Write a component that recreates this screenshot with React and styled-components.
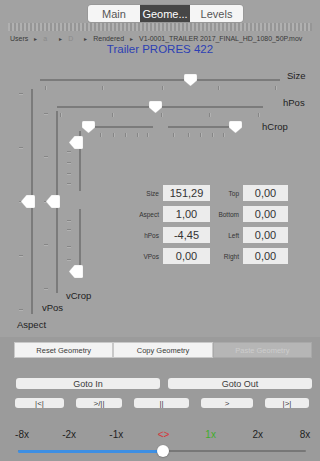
import React from "react";
import styled, { createGlobalStyle } from "styled-components";

const GlobalStyle = createGlobalStyle`
  html, body { margin: 0; padding: 0; background: #a2a2a2; }
  body { font-family: "Liberation Sans", Arial, sans-serif; }
`;

const hSliders = [
  { x: 40, y: 23, len: 240, thumbs: [150], ticks: [5, 62, 122, 178, 235] },
  { x: 57, y: 50, len: 206, thumbs: [98], ticks: [3, 55, 104, 152, 201] },
  { x: 88, y: 70, len: 65, thumbs: [0], ticks: [12, 25, 37, 49, 59] },
  { x: 168, y: 70, len: 68, thumbs: [67], ticks: [5, 20, 32, 44, 55] },
];

const vSliders = [
  { x: 31, y: 33, len: 225, thumbs: [112], ticks: [4, 58, 112, 166, 220] },
  { x: 56, y: 55, len: 182, thumbs: [90], ticks: [2, 45, 90, 133, 177] },
  { x: 79, y: 75, len: 60, thumbs: [11], ticks: [20, 31, 42, 52] },
  { x: 79, y: 153, len: 64, thumbs: [62], ticks: [11, 20, 37, 50] },
];

const sliderLabels = [
  { text: "Size", x: 287, y: 14 },
  { text: "hPos", x: 283, y: 41 },
  { text: "hCrop", x: 262, y: 65 },
  { text: "Aspect", x: 17, y: 263 },
  { text: "vPos", x: 42, y: 246 },
  { text: "vCrop", x: 66, y: 234 },
];

const fields = [
  ["Size", "151,29", "Top", "0,00"],
  ["Aspect", "1,00", "Bottom", "0,00"],
  ["hPos", "-4,45", "Left", "0,00"],
  ["VPos", "0,00", "Right", "0,00"],
];

const transport = [
  { label: "|<|", w: 49 },
  { label: ">/||", w: 46 },
  { label: "||", w: 55 },
  { label: ">", w: 52 },
  { label: "|>|", w: 44 },
];

const speeds = [
  { label: "-8x" },
  { label: "-2x" },
  { label: "-1x" },
  { label: "<>", color: "#d8343a" },
  { label: "1x", color: "#3fae2a" },
  { label: "2x" },
  { label: "8x" },
];

function DownThumb() {
  return (
    <svg width="13" height="12" viewBox="0 0 13 12">
      <path
        d="M1.5 0 H11.5 Q13 0 13 1.5 V6.5 L6.5 12 L0 6.5 V1.5 Q0 0 1.5 0Z"
        fill="#ffffff"
        stroke="#d6d6d6"
        strokeWidth="0.5"
      />
    </svg>
  );
}

function LeftThumb() {
  return (
    <svg width="14" height="13" viewBox="0 0 14 13">
      <path
        d="M14 1.5 V11.5 Q14 13 12.5 13 H5.5 L0 6.5 L5.5 0 H12.5 Q14 0 14 1.5Z"
        fill="#ffffff"
        stroke="#d6d6d6"
        strokeWidth="0.5"
      />
    </svg>
  );
}

function Slider({ x, y, len, thumbs, ticks, vertical }) {
  return (
    <Track $x={x} $y={y} $len={len} $v={vertical}>
      {ticks.map((t, i) => (
        <Tick key={i} $pos={t} $v={vertical} />
      ))}
      {thumbs.map((t, i) => (
        <Thumb key={i} $pos={t} $v={vertical}>
          {vertical ? <LeftThumb /> : <DownThumb />}
        </Thumb>
      ))}
    </Track>
  );
}

export default function App() {
  return (
    <Page>
      <GlobalStyle />
      <Tabs>
        <Tab $w={52}>Main</Tab>
        <Tab $w={50} $active>
          Geome...
        </Tab>
        <Tab $w={53}>Levels</Tab>
      </Tabs>
      <Stripe />
      <PathBar>
        <span>Users</span>
        <Chevron>▸</Chevron>
        <Faded>a</Faded>
        <Chevron>▸</Chevron>
        <Faded>D</Faded>
        <Chevron>▸</Chevron>
        <span>Rendered</span>
        <Chevron>▸</Chevron>
        <FileName>V1-0001_TRAILER 2017_FINAL_HD_1080_50P.mov</FileName>
      </PathBar>
      <Title>Trailer PRORES 422</Title>

      <GeometryCanvas>
        {hSliders.map((s, i) => (
          <Slider key={"h" + i} {...s} />
        ))}
        {vSliders.map((s, i) => (
          <Slider key={"v" + i} {...s} vertical />
        ))}
        {sliderLabels.map((l) => (
          <SliderLabel key={l.text} $x={l.x} $y={l.y}>
            {l.text}
          </SliderLabel>
        ))}
        <FieldGrid>
          {fields.map((row) => (
            <React.Fragment key={row[0]}>
              <FieldLabel>{row[0]}</FieldLabel>
              <FieldValue>{row[1]}</FieldValue>
              <FieldLabel>{row[2]}</FieldLabel>
              <FieldValue>{row[3]}</FieldValue>
            </React.Fragment>
          ))}
        </FieldGrid>
      </GeometryCanvas>

      <BottomPanel>
        <GeometryButtons>
          <GeoButton>Reset Geometry</GeoButton>
          <GeoButton>Copy Geometry</GeoButton>
          <GeoButton $disabled>Paste Geometry</GeoButton>
        </GeometryButtons>
        <GotoRow>
          <RoundButton>Goto In</RoundButton>
          <RoundButton>Goto Out</RoundButton>
        </GotoRow>
        <TransportRow>
          {transport.map((b) => (
            <TransportButton key={b.label} $w={b.w}>
              {b.label}
            </TransportButton>
          ))}
        </TransportRow>
        <SpeedLabels>
          {speeds.map((s) => (
            <SpeedLabel key={s.label} $color={s.color}>
              {s.label}
            </SpeedLabel>
          ))}
        </SpeedLabels>
        <SpeedSlider>
          <SpeedTrack>
            <SpeedFill style={{ width: "50.3%" }} />
            <SpeedKnob style={{ left: "50.3%" }} />
          </SpeedTrack>
        </SpeedSlider>
      </BottomPanel>
    </Page>
  );
}

const Page = styled.div`
  width: 320px;
  height: 461px;
  display: flex;
  flex-direction: column;
  background: #a2a2a2;
  overflow: hidden;
`;

const Tabs = styled.div`
  align-self: flex-start;
  margin: 5px 0 0 88px;
  height: 17px;
  display: flex;
  background: #f5f5f5;
  border-radius: 3px;
  overflow: hidden;
  box-shadow: 0 0 0 0.5px #8d8d8d;
`;

const Tab = styled.div`
  width: ${(p) => p.$w}px;
  display: flex;
  align-items: center;
  justify-content: center;
  font-size: 11px;
  color: ${(p) => (p.$active ? "#ffffff" : "#555555")};
  background: ${(p) => (p.$active ? "#464646" : "transparent")};
`;

const Stripe = styled.div`
  margin: 1px 8px 0;
  height: 8px;
  background: repeating-linear-gradient(
    90deg,
    #b4b4b4 0,
    #b4b4b4 2px,
    #939393 2px,
    #939393 4px
  );
  opacity: 0.8;
`;

const PathBar = styled.div`
  margin-top: 3px;
  padding-left: 10px;
  height: 9px;
  display: flex;
  align-items: center;
  gap: 6px;
  font-size: 7px;
  color: #3a3a3a;
  white-space: nowrap;
`;

const Chevron = styled.span`
  font-size: 6px;
  color: #444;
`;

const Faded = styled.span`
  color: #8a8a8a;
  width: 10px;
`;

const FileName = styled.span`
  letter-spacing: -0.05px;
`;

const Title = styled.div`
  height: 13px;
  line-height: 13px;
  text-align: center;
  font-size: 11.5px;
  color: #2c3fb4;
`;

const GeometryCanvas = styled.div`
  position: relative;
  height: 281px;
  padding: 129px 0 0 130px;
  box-sizing: border-box;
`;

const Track = styled.div`
  position: absolute;
  left: ${(p) => p.$x}px;
  top: ${(p) => p.$y}px;
  width: ${(p) => (p.$v ? 2 : p.$len)}px;
  height: ${(p) => (p.$v ? p.$len : 2)}px;
  background: #7b7b7b;
`;

const Tick = styled.div`
  position: absolute;
  background: #868686;
  ${(p) =>
    p.$v
      ? `top: ${p.$pos}px; left: -12px; width: 4px; height: 1px; box-shadow: 0 1px 0 #b2b2b2;`
      : `left: ${p.$pos}px; top: 7px; width: 1px; height: 4px; box-shadow: 1px 0 0 #b2b2b2;`}
`;

const Thumb = styled.div`
  position: absolute;
  display: flex;
  filter: drop-shadow(0 0.5px 0.5px rgba(0, 0, 0, 0.25));
  ${(p) =>
    p.$v
      ? `top: ${p.$pos - 6.5}px; left: -10px;`
      : `left: ${p.$pos - 6.5}px; top: -5px;`}
`;

const SliderLabel = styled.div`
  position: absolute;
  left: ${(p) => p.$x}px;
  top: ${(p) => p.$y}px;
  font-size: 9.5px;
  line-height: 12px;
  color: #1e1e1e;
`;

const FieldGrid = styled.div`
  display: grid;
  grid-template-columns: 29px 47px 25px 45px;
  grid-auto-rows: 16px;
  column-gap: 4px;
  row-gap: 5px;
  width: max-content;
`;

const FieldLabel = styled.div`
  display: flex;
  align-items: center;
  justify-content: flex-end;
  font-size: 6.5px;
  color: #333;
`;

const FieldValue = styled.div`
  display: flex;
  align-items: center;
  justify-content: center;
  background: #ececec;
  font-size: 11px;
  color: #333;
`;

const BottomPanel = styled.div`
  flex: 1;
  display: flex;
  flex-direction: column;
  background: #9b9b9b;
  padding-top: 5px;
`;

const GeometryButtons = styled.div`
  display: flex;
  margin: 0 8px 0 14px;
  height: 16px;
`;

const GeoButton = styled.div`
  flex: 1;
  display: flex;
  align-items: center;
  justify-content: center;
  font-size: 7.5px;
  box-sizing: border-box;
  border: 1px solid ${(p) => (p.$disabled ? "#a9a9a9" : "#c9c9c9")};
  background: ${(p) => (p.$disabled ? "#b6b6b6" : "#f3f3f3")};
  color: ${(p) => (p.$disabled ? "#cdcdcd" : "#3a3a3a")};
`;

const GotoRow = styled.div`
  display: flex;
  gap: 8px;
  margin: 20px 8px 0 16px;
  height: 11px;
`;

const RoundButton = styled.div`
  flex: 1;
  display: flex;
  align-items: center;
  justify-content: center;
  border-radius: 3px;
  background: #eeeeee;
  font-size: 9px;
  color: #3a3a3a;
`;

const TransportRow = styled.div`
  display: flex;
  gap: 12px;
  margin: 9px 0 0 15px;
  height: 10px;
`;

const TransportButton = styled.div`
  width: ${(p) => p.$w}px;
  display: flex;
  align-items: center;
  justify-content: center;
  border-radius: 3px;
  background: #eeeeee;
  font-size: 8px;
  color: #3a3a3a;
`;

const SpeedLabels = styled.div`
  display: flex;
  justify-content: space-between;
  margin: 21px 3px 0 10px;
`;

const SpeedLabel = styled.div`
  width: 24px;
  text-align: center;
  font-size: 10px;
  line-height: 12px;
  color: ${(p) => p.$color || "#1f1f1f"};
`;

const SpeedSlider = styled.div`
  margin: 4px 14px 0 18px;
  height: 12px;
  display: flex;
  align-items: center;
`;

const SpeedTrack = styled.div`
  position: relative;
  flex: 1;
  height: 2px;
  background: #777777;
  border-radius: 1px;
`;

const SpeedFill = styled.div`
  height: 3px;
  margin-top: -0.5px;
  background: #3d8fe4;
  border-radius: 1.5px;
`;

const SpeedKnob = styled.div`
  position: absolute;
  top: 50%;
  width: 12px;
  height: 12px;
  margin: -6px 0 0 -6px;
  border-radius: 50%;
  background: #ffffff;
  box-shadow: 0 0.5px 1.5px rgba(0, 0, 0, 0.35);
`;
